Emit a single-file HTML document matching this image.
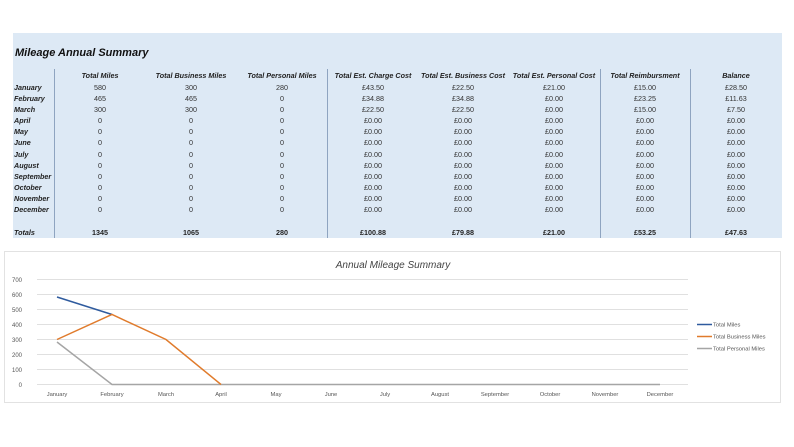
<!DOCTYPE html>
<html><head><meta charset="utf-8"><style>
html,body{margin:0;padding:0;background:#fff;width:794px;height:447px;overflow:hidden}
svg{display:block}
</style></head><body>
<svg width="794" height="447" viewBox="0 0 794 447" xmlns="http://www.w3.org/2000/svg" font-family="Liberation Sans, sans-serif">
<rect x="13" y="33" width="769" height="205" fill="#dde9f5"/>
<text x="15" y="56" font-size="11" font-weight="bold" font-style="italic" fill="#111">Mileage Annual Summary</text>
<g stroke="#8ea4c0" stroke-width="1">
<line x1="54.5" y1="69" x2="54.5" y2="238"/>
<line x1="327.5" y1="69" x2="327.5" y2="238"/>
<line x1="600.5" y1="69" x2="600.5" y2="238"/>
<line x1="690.5" y1="69" x2="690.5" y2="238"/>
</g>
<g font-size="7.2" font-weight="bold" font-style="italic" fill="#222" text-anchor="middle">
<text x="100" y="78">Total Miles</text>
<text x="191" y="78">Total Business Miles</text>
<text x="282" y="78">Total Personal Miles</text>
<text x="373" y="78">Total Est. Charge Cost</text>
<text x="463" y="78">Total Est. Business Cost</text>
<text x="554" y="78">Total Est. Personal Cost</text>
<text x="645" y="78">Total Reimbursment</text>
<text x="736" y="78">Balance</text>
</g>
<g font-size="7.2" font-weight="bold" font-style="italic" fill="#222">
<text x="14" y="90">January</text><text x="14" y="101">February</text><text x="14" y="112">March</text>
<text x="14" y="123">April</text><text x="14" y="134">May</text><text x="14" y="145">June</text>
<text x="14" y="157">July</text><text x="14" y="168">August</text><text x="14" y="179">September</text>
<text x="14" y="190">October</text><text x="14" y="201">November</text><text x="14" y="212">December</text>
<text x="14" y="235">Totals</text>
</g>
<g font-size="7.2" fill="#333" text-anchor="middle">
<text x="100" y="90">580</text><text x="191" y="90">300</text><text x="282" y="90">280</text><text x="373" y="90">£43.50</text><text x="463" y="90">£22.50</text><text x="554" y="90">£21.00</text><text x="645" y="90">£15.00</text><text x="736" y="90">£28.50</text>
<text x="100" y="101">465</text><text x="191" y="101">465</text><text x="282" y="101">0</text><text x="373" y="101">£34.88</text><text x="463" y="101">£34.88</text><text x="554" y="101">£0.00</text><text x="645" y="101">£23.25</text><text x="736" y="101">£11.63</text>
<text x="100" y="112">300</text><text x="191" y="112">300</text><text x="282" y="112">0</text><text x="373" y="112">£22.50</text><text x="463" y="112">£22.50</text><text x="554" y="112">£0.00</text><text x="645" y="112">£15.00</text><text x="736" y="112">£7.50</text>
</g>
<g font-size="7.2" fill="#333" text-anchor="middle" id="zr">
<text x="100" y="123">0</text><text x="191" y="123">0</text><text x="282" y="123">0</text><text x="373" y="123">£0.00</text><text x="463" y="123">£0.00</text><text x="554" y="123">£0.00</text><text x="645" y="123">£0.00</text><text x="736" y="123">£0.00</text>
</g>
<use href="#zr" y="11"/><use href="#zr" y="22"/><use href="#zr" y="34"/><use href="#zr" y="45"/><use href="#zr" y="56"/><use href="#zr" y="67"/><use href="#zr" y="78"/><use href="#zr" y="89"/>
<g font-size="7.2" font-weight="bold" fill="#222" text-anchor="middle">
<text x="100" y="235">1345</text><text x="191" y="235">1065</text><text x="282" y="235">280</text><text x="373" y="235">£100.88</text><text x="463" y="235">£79.88</text><text x="554" y="235">£21.00</text><text x="645" y="235">£53.25</text><text x="736" y="235">£47.63</text>
</g>

<rect x="4.5" y="251.5" width="776" height="151" fill="#fff" stroke="#e2e2e2"/>
<text x="393" y="268" font-size="10" font-style="italic" fill="#444" text-anchor="middle">Annual Mileage Summary</text>
<g stroke="#e0e0e0" stroke-width="1">
<line x1="37" y1="279.5" x2="688" y2="279.5"/><line x1="37" y1="294.5" x2="688" y2="294.5"/>
<line x1="37" y1="309.5" x2="688" y2="309.5"/><line x1="37" y1="324.5" x2="688" y2="324.5"/>
<line x1="37" y1="339.5" x2="688" y2="339.5"/><line x1="37" y1="354.5" x2="688" y2="354.5"/>
<line x1="37" y1="369.5" x2="688" y2="369.5"/><line x1="37" y1="384.5" x2="688" y2="384.5"/>
</g>
<g font-size="6" fill="#555" text-anchor="end">
<text x="22" y="282">700</text><text x="22" y="297">600</text><text x="22" y="312">500</text><text x="22" y="327">400</text>
<text x="22" y="342">300</text><text x="22" y="357">200</text><text x="22" y="372">100</text><text x="22" y="387">0</text>
</g>
<g font-size="5.8" fill="#555" text-anchor="middle">
<text x="57" y="396">January</text><text x="112" y="396">February</text><text x="166" y="396">March</text><text x="221" y="396">April</text>
<text x="276" y="396">May</text><text x="331" y="396">June</text><text x="385" y="396">July</text><text x="440" y="396">August</text>
<text x="495" y="396">September</text><text x="550" y="396">October</text><text x="605" y="396">November</text><text x="660" y="396">December</text>
</g>
<polyline fill="none" stroke="#a5a5a5" stroke-width="1.5" points="57,342 112,384.5 660,384.5"/>
<polyline fill="none" stroke="#2f5b9e" stroke-width="1.5" points="57,297 112,314.5"/>
<polyline fill="none" stroke="#e07b2c" stroke-width="1.5" points="57,339.5 112,314.5 166,339.5 221,384.5"/>
<line x1="697" y1="324.5" x2="712" y2="324.5" stroke="#2f5b9e" stroke-width="1.5"/>
<line x1="697" y1="336.5" x2="712" y2="336.5" stroke="#e07b2c" stroke-width="1.5"/>
<line x1="697" y1="348.5" x2="712" y2="348.5" stroke="#a5a5a5" stroke-width="1.5"/>
<g font-size="5.8" fill="#555">
<text x="713" y="326.5">Total Miles</text><text x="713" y="338.5">Total Business Miles</text><text x="713" y="350.5">Total Personal Miles</text>
</g>
</svg>
</body></html>
